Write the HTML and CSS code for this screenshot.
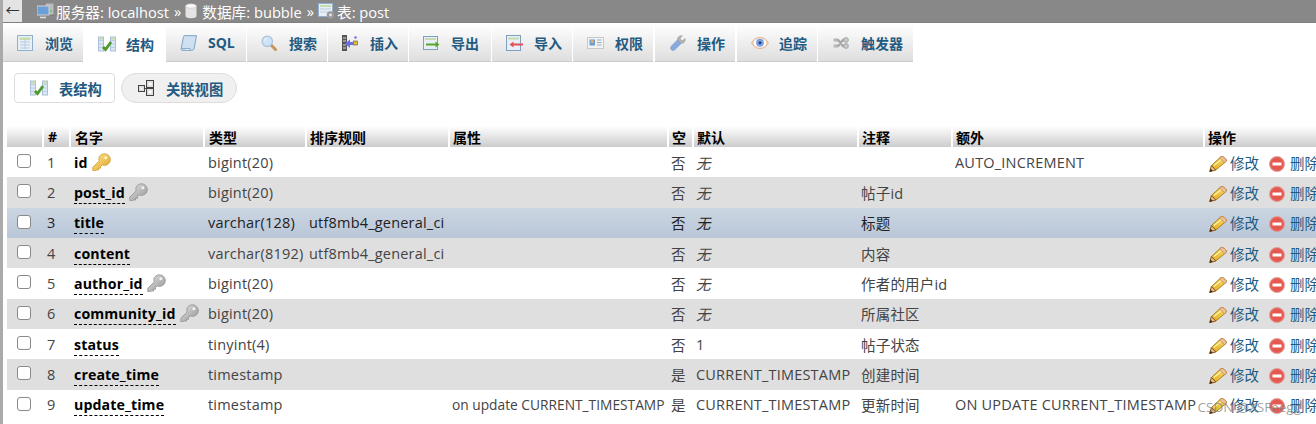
FILE: index.html
```html
<!DOCTYPE html>
<html lang="zh">
<head>
<meta charset="utf-8">
<title>post</title>
<link rel="stylesheet" href="styles.css">
</head>
<body>
<svg class="defs" width="0" height="0" aria-hidden="true">
  <defs>
    <linearGradient id="gk" x1="0" y1="0" x2="1" y2="1"><stop offset="0" stop-color="#fdeb9a"/><stop offset="1" stop-color="#e0a020"/></linearGradient>
    <linearGradient id="gg" x1="0" y1="0" x2="1" y2="1"><stop offset="0" stop-color="#e4e4e4"/><stop offset="1" stop-color="#929292"/></linearGradient>
    <linearGradient id="gp" x1="0" y1="1" x2="1" y2="0"><stop offset="0" stop-color="#e2ac1e"/><stop offset="1" stop-color="#f8de6a"/></linearGradient>
    <symbol id="i-key-gold" viewBox="0 0 19 18"><path d="M12.500.8a5.800 5.800 0 0 1 5.800 5.800c0 3.400-2.800 5.800-5.800 5.800-.9 0-1.600-.2-2.300-.5L8.500 13.500v1.700H6.500v1.800H4l-.6.6H.8v-3.300l6.400-6.400c-.2-.7-.4-1.300-.4-2.100C6.800 3.200 9.300.8 12.500.8z" fill="url(#gk)" stroke="#cf9a2c" stroke-width=".8"/><circle cx="13.800" cy="4.800" r="1.500" fill="#fff4c0"/></symbol>
    <symbol id="i-key-grey" viewBox="0 0 19 18"><path d="M12.500.8a5.800 5.800 0 0 1 5.800 5.800c0 3.400-2.800 5.800-5.800 5.800-.9 0-1.600-.2-2.300-.5L8.500 13.500v1.700H6.500v1.800H4l-.6.6H.8v-3.300l6.400-6.400c-.2-.7-.4-1.300-.4-2.100C6.800 3.200 9.300.8 12.500.8z" fill="url(#gg)" stroke="#8f8f8f" stroke-width=".8"/><circle cx="13.800" cy="4.800" r="1.500" fill="#f2f2f2"/></symbol>
    <symbol id="i-edit" viewBox="0 0 18 16"><path d="M12 .6c2-.5 5.600 2 5.400 4.500L6.800 14 2.400 9.600z" fill="url(#gp)" stroke="#a8741a" stroke-width=".9"/><path d="M12 .6c2-.5 5.600 2 5.400 4.500l-1.900 1.600-5-4.700z" fill="#efbf98" stroke="#b98850" stroke-width=".8"/><path d="M4.800 9.500l7.200-5.800" stroke="#fff3a8" stroke-width="1.300"/><path d="M2.400 9.600l4.400 4.400-6.200 1.700z" fill="#e6c08e" stroke="#7e4c12" stroke-width=".9"/><path d="M.6 15.700l.9-3.200 2.300 2.300z" fill="#4e2c06"/></symbol>
    <symbol id="i-del" viewBox="0 0 16 16"><circle cx="8" cy="8" r="7.600" fill="#e8655e" stroke="#d9a19c" stroke-width=".8"/><circle cx="8" cy="8" r="6" fill="#e55850"/><rect x="3.500" y="6.500" width="9" height="3" fill="#fff"/></symbol>
    <symbol id="i-struct" viewBox="0 0 18 16"><rect x=".5" y="1" width="5" height="14" fill="#dbe7f3" stroke="#a9c0d8"/><rect x="12.500" y="1" width="5" height="14" fill="#dbe7f3" stroke="#a9c0d8"/><path d="M1 4.500h4M1 8h4M1 11.500h4M13 4.500h4M13 8h4M13 11.500h4" stroke="#b8cfe6"/><rect x="1" y="1.500" width="4" height="2" fill="#c7dcae"/><rect x="13" y="1.500" width="4" height="2" fill="#c7dcae"/><path d="M5 11l2.500 2.500L13 6" fill="none" stroke="#4e9a2a" stroke-width="2.800"/></symbol>
    <symbol id="i-rel" viewBox="0 0 16 16"><rect x=".5" y="5.500" width="6" height="6" fill="#ddd" stroke="#444"/><rect x="8.500" y=".5" width="7" height="7" fill="#ddd" stroke="#444"/><rect x="8.500" y="8.500" width="7" height="7" fill="#ddd" stroke="#444"/><rect x="10.500" y="2.500" width="3" height="3" fill="#fff"/><rect x="10.500" y="10.500" width="3" height="3" fill="#fff"/><rect x="2.500" y="7.500" width="2" height="2" fill="#fff"/><path d="M6.500 8.500h2" stroke="#444"/></symbol>
    <symbol id="i-browse" viewBox="0 0 16 16"><rect x=".5" y=".5" width="15" height="15" fill="#e8eff7" stroke="#8fb0d0"/><path d="M3 7h10M3 10h10M3 13h10M8 5v9" stroke="#b8cce0"/><rect x="2.500" y="2.500" width="11" height="2.500" fill="#c7dcae"/></symbol>
    <symbol id="i-sql" viewBox="0 0 18 17"><path d="M4 .7h13l-2.500 13c-.3 1.700-1 2.600-2.500 2.600H2c-1 0-1.500-.8-1.300-2L3 2.500C3.200 1.300 3.400.7 4 .7z" fill="#cfe0f2" stroke="#6d94bd" stroke-width=".9"/><path d="M.8 14.300H10c-.3 1-.1 1.700.8 2" fill="#f0f6fc" stroke="#6d94bd" stroke-width=".8"/></symbol>
    <symbol id="i-search" viewBox="0 0 16 16"><path d="M10 10l4.500 4.500" stroke="#c9935a" stroke-width="3" stroke-linecap="round"/><circle cx="6.300" cy="6.300" r="5.200" fill="#cfe3f6" stroke="#a8c3db" stroke-width="1.300"/><path d="M3.500 5.500c.5-1.300 1.300-2 2.500-2.200" stroke="#fff" fill="none"/></symbol>
    <symbol id="i-insert" viewBox="0 0 16 16"><rect x="0" y="0" width="5" height="16" fill="#555"/><path d="M1 3h3M1 6h3M1 10h3M1 13h3" stroke="#ddd"/><path d="M3 8.500l5-4v2.500h3v3H8V13z" fill="#6a6ee0"/><rect x="11.500" y="6" width="4" height="4" fill="#e5b930" stroke="#555" stroke-width=".6"/><circle cx="13.500" cy="2.500" r="1.200" fill="#6a6ee0"/></symbol>
    <symbol id="i-export" viewBox="0 0 17 16"><rect x=".5" y="1.500" width="14" height="13" fill="#e8eff7" stroke="#7f9fbf"/><rect x="2" y="3" width="11" height="2" fill="#c7dcae"/><path d="M3 8.500h9.500V6.500l4 3-4 3v-2H3z" fill="#5aa52c"/></symbol>
    <symbol id="i-import" viewBox="0 0 17 16"><rect x=".5" y=".5" width="14" height="15" fill="#e8eff7" stroke="#7f9fbf"/><rect x="2" y="2.500" width="11" height="2" fill="#c7dcae"/><path d="M17 8.500H7.500V6.500l-4 3 4 3v-2H17z" fill="#e0505a"/></symbol>
    <symbol id="i-priv" viewBox="0 0 17 16"><rect x=".5" y="2.500" width="16" height="11" fill="#f3f3f3" stroke="#c8c8c8"/><rect x="2.500" y="4.500" width="5.500" height="6" fill="#6a9ed0"/><circle cx="5.200" cy="6.500" r="1.500" fill="#e9b070"/><path d="M10 5h4.500M10 7.500h4.500M10 10h4.500" stroke="#9ab"/></symbol>
    <symbol id="i-ops" viewBox="0 0 18 18"><path d="M1.500 16.500c-1.500-1.500-.8-3.200.5-4.500l6.500-6.500 4 4-6.500 6.500c-1.300 1.300-3 2-4.500.5z" fill="#86a9e0" stroke="#6a8cc0" stroke-width=".6"/><path d="M8.500 5.500C8 2.500 10.500.3 14 .8l-2.500 2.500.5 2.500 2.500.5 2.500-2.500c.5 3.500-1.500 6-4.500 5.500z" fill="#b4b4b4" stroke="#8f8f8f" stroke-width=".5"/></symbol>
    <symbol id="i-track" viewBox="0 0 18 12"><path d="M.5 6C3 1.500 6 .5 9 .5s6 1 8.500 5.500c-2.500 4.500-5.500 5.500-8.500 5.500S3 10.500.5 6z" fill="#f3cfb2" stroke="#d9a985" stroke-width=".7"/><ellipse cx="9" cy="6" rx="6.300" ry="4.500" fill="#fff"/><circle cx="9" cy="5.800" r="4" fill="#7da2e0"/><circle cx="9" cy="5.800" r="1.500" fill="#24408a"/></symbol>
    <symbol id="i-trig" viewBox="0 0 16 12"><path d="M1.500 3h3.500l5 6h3M1.500 9h3.500l5-6h3" fill="none" stroke="#a8a8a8" stroke-width="2.400"/><circle cx="13" cy="3" r="2.400" fill="#ccc" stroke="#8f8f8f" stroke-width=".7"/><circle cx="13" cy="9" r="2.400" fill="#ccc" stroke="#8f8f8f" stroke-width=".7"/><rect x=".5" y="1.500" width="3.500" height="3" fill="#bbb"/><rect x=".5" y="7.500" width="3.500" height="3" fill="#bbb"/></symbol>
    <symbol id="i-server" viewBox="0 0 17 16"><rect x="8" y="0" width="9" height="12" fill="#bbb" stroke="#666" stroke-width=".6"/><rect x="0" y="3" width="12" height="9" fill="#6a9fd8" stroke="#d0d0d0"/><path d="M3 14.500h6" stroke="#ddd" stroke-width="1.600"/><rect x="13" y="7" width="2" height="2" fill="#6c6"/></symbol>
    <symbol id="i-db" viewBox="0 0 12 16"><path d="M.5 3v10c0 3 11 3 11 0V3z" fill="#e4e4e4"/><ellipse cx="6" cy="3" rx="5.500" ry="2.200" fill="#f8f8f8" stroke="#bbb" stroke-width=".5"/></symbol>
    <symbol id="i-tbl" viewBox="0 0 17 16"><rect x=".5" y=".5" width="14" height="13" fill="#e8eff7" stroke="#8fb0d0"/><rect x="2" y="2" width="11" height="2" fill="#c7dcae"/><path d="M2 6h11M2 9h11" stroke="#b8cce0"/><circle cx="12.500" cy="12" r="3.800" fill="#9a9a9a"/><circle cx="12.500" cy="12" r="1.400" fill="#e6e6e6"/></symbol>
  </defs>
</svg>

<div class="page">
  <header class="topbar">
    <span class="back">←</span>
    <nav class="crumbs">
      <svg class="ic-crumb"><use href="#i-server"/></svg><span>服务器: localhost</span><span class="sep">»</span>
      <svg class="ic-crumb ic-db"><use href="#i-db"/></svg><span>数据库: bubble</span><span class="sep">»</span>
      <svg class="ic-crumb"><use href="#i-tbl"/></svg><span>表: post</span>
    </nav>
  </header>

  <nav class="tabs">
    <a class="tab"><svg class="ic"><use href="#i-browse"/></svg>浏览</a>
    <a class="tab active"><svg class="ic ic-wide"><use href="#i-struct"/></svg>结构</a>
    <a class="tab"><svg class="ic ic-wide"><use href="#i-sql"/></svg>SQL</a>
    <a class="tab"><svg class="ic"><use href="#i-search"/></svg>搜索</a>
    <a class="tab"><svg class="ic"><use href="#i-insert"/></svg>插入</a>
    <a class="tab wide"><svg class="ic ic-17"><use href="#i-export"/></svg>导出</a>
    <a class="tab"><svg class="ic ic-17"><use href="#i-import"/></svg>导入</a>
    <a class="tab gap"><svg class="ic ic-17"><use href="#i-priv"/></svg>权限</a>
    <a class="tab gap"><svg class="ic ic-wide"><use href="#i-ops"/></svg>操作</a>
    <a class="tab"><svg class="ic ic-wide"><use href="#i-track"/></svg>追踪</a>
    <a class="tab last"><svg class="ic"><use href="#i-trig"/></svg>触发器</a>
  </nav>

  <div class="subnav">
    <a class="sub first"><svg class="ic ic-wide"><use href="#i-struct"/></svg>表结构</a>
    <a class="sub second"><svg class="ic"><use href="#i-rel"/></svg>关联视图</a>
  </div>

  <div class="table-wrap">
    <table class="fields">
      <colgroup>
        <col class="c-check"><col class="c-num"><col class="c-name"><col class="c-type"><col class="c-coll"><col class="c-attr"><col class="c-null"><col class="c-def"><col class="c-com"><col class="c-extra"><col class="c-act">
      </colgroup>
      <thead>
        <tr><th></th><th class="num">#</th><th class="pad4">名字</th><th class="pad4">类型</th><th>排序规则</th><th>属性</th><th>空</th><th>默认</th><th>注释</th><th>额外</th><th>操作</th></tr>
      </thead>
      <tbody>
        <tr>
          <td class="cb"><span class="check"></span></td><td class="num">1</td>
          <td class="pad4"><b>id</b><svg class="key"><use href="#i-key-gold"/></svg></td>
          <td class="pad4">bigint(20)</td><td></td><td></td><td>否</td><td><i>无</i></td><td></td><td>AUTO_INCREMENT</td>
          <td class="act"><svg class="pen"><use href="#i-edit"/></svg><a>修改</a><svg class="del"><use href="#i-del"/></svg><a>删除</a></td>
        </tr>
        <tr class="even">
          <td class="cb"><span class="check"></span></td><td class="num">2</td>
          <td class="pad4"><b class="fn">post_id</b><svg class="key"><use href="#i-key-grey"/></svg></td>
          <td class="pad4">bigint(20)</td><td></td><td></td><td>否</td><td><i>无</i></td><td>帖子id</td><td></td>
          <td class="act"><svg class="pen"><use href="#i-edit"/></svg><a>修改</a><svg class="del"><use href="#i-del"/></svg><a>删除</a></td>
        </tr>
        <tr class="hover">
          <td class="cb"><span class="check"></span></td><td class="num">3</td>
          <td class="pad4"><b class="fn">title</b></td>
          <td class="pad4">varchar(128)</td><td>utf8mb4_general_ci</td><td></td><td>否</td><td><i>无</i></td><td>标题</td><td></td>
          <td class="act"><svg class="pen"><use href="#i-edit"/></svg><a>修改</a><svg class="del"><use href="#i-del"/></svg><a>删除</a></td>
        </tr>
        <tr class="even">
          <td class="cb"><span class="check"></span></td><td class="num">4</td>
          <td class="pad4"><b class="fn">content</b></td>
          <td class="pad4">varchar(8192)</td><td>utf8mb4_general_ci</td><td></td><td>否</td><td><i>无</i></td><td>内容</td><td></td>
          <td class="act"><svg class="pen"><use href="#i-edit"/></svg><a>修改</a><svg class="del"><use href="#i-del"/></svg><a>删除</a></td>
        </tr>
        <tr>
          <td class="cb"><span class="check"></span></td><td class="num">5</td>
          <td class="pad4"><b class="fn">author_id</b><svg class="key"><use href="#i-key-grey"/></svg></td>
          <td class="pad4">bigint(20)</td><td></td><td></td><td>否</td><td><i>无</i></td><td>作者的用户id</td><td></td>
          <td class="act"><svg class="pen"><use href="#i-edit"/></svg><a>修改</a><svg class="del"><use href="#i-del"/></svg><a>删除</a></td>
        </tr>
        <tr class="even">
          <td class="cb"><span class="check"></span></td><td class="num">6</td>
          <td class="pad4"><b class="fn">community_id</b><svg class="key"><use href="#i-key-grey"/></svg></td>
          <td class="pad4">bigint(20)</td><td></td><td></td><td>否</td><td><i>无</i></td><td>所属社区</td><td></td>
          <td class="act"><svg class="pen"><use href="#i-edit"/></svg><a>修改</a><svg class="del"><use href="#i-del"/></svg><a>删除</a></td>
        </tr>
        <tr>
          <td class="cb"><span class="check"></span></td><td class="num">7</td>
          <td class="pad4"><b class="fn">status</b></td>
          <td class="pad4">tinyint(4)</td><td></td><td></td><td>否</td><td>1</td><td>帖子状态</td><td></td>
          <td class="act"><svg class="pen"><use href="#i-edit"/></svg><a>修改</a><svg class="del"><use href="#i-del"/></svg><a>删除</a></td>
        </tr>
        <tr class="even">
          <td class="cb"><span class="check"></span></td><td class="num">8</td>
          <td class="pad4"><b class="fn">create_time</b></td>
          <td class="pad4">timestamp</td><td></td><td></td><td>是</td><td>CURRENT_TIMESTAMP</td><td>创建时间</td><td></td>
          <td class="act"><svg class="pen"><use href="#i-edit"/></svg><a>修改</a><svg class="del"><use href="#i-del"/></svg><a>删除</a></td>
        </tr>
        <tr>
          <td class="cb"><span class="check"></span></td><td class="num">9</td>
          <td class="pad4"><b class="fn">update_time</b></td>
          <td class="pad4">timestamp</td><td></td><td class="attr">on update CURRENT_TIMESTAMP</td><td>是</td><td>CURRENT_TIMESTAMP</td><td>更新时间</td><td>ON UPDATE CURRENT_TIMESTAMP</td>
          <td class="act"><svg class="pen"><use href="#i-edit"/></svg><a>修改</a><svg class="del"><use href="#i-del"/></svg><a>删除</a></td>
        </tr>
      </tbody>
    </table>
    <span class="watermark">CSDN @XSFeegg</span>
  </div>
</div>
</body>
</html>
```
FILE: styles.css
```css
* { box-sizing: border-box; }
html, body { margin: 0; height: 100%; }
body {
  width: 1316px;
  height: 424px;
  overflow: hidden;
  background: #fff;
  font-family: "Open Sans", "Noto Sans CJK SC", sans-serif;
  font-size: 14px;
  color: #444;
}
.defs { position: absolute; }
.page { height: 424px; border-left: 3px solid #aaa; position: relative; overflow: hidden; }

.topbar {
  height: 23px;
  margin-left: -3px;
  padding-left: 3px;
  background: #888;
  display: flex;
  align-items: center;
  color: #fff;
  border-bottom: 1px solid #808080;
}
.back {
  width: 19px; height: 22px;
  background: #e4e4e4;
  color: #333;
  font-size: 14px;
  line-height: 20px;
  text-align: center;
  flex: none;
}
.crumbs { display: flex; align-items: center; margin-left: 15px; font-size: 14.670px; white-space: nowrap; }
.ic-crumb { width: 17px; height: 16px; margin-right: 2px; }
.ic-db { width: 12px; margin-right: 5px; }
.sep { margin: 0 4px 0 5px; }

.tabs {
  display: flex;
  height: 39px;
  padding-top: 1px;
  background: #fff;
}
.tab {
  width: 80px;
  height: 38px;
  margin-right: 1px;
  padding-left: 14px;
  display: flex;
  align-items: center;
  font-weight: 700;
  font-size: 14px;
  color: #235a81;
  background: linear-gradient(#fff, #dedede);
  border-bottom: 1px solid #ccc;
  white-space: nowrap;
}
.tab.wide { width: 82px; }
.tab.gap { margin-right: 2px; }
.tab.last { width: 95px; padding-left: 15px; }
.tab.active { background: #fff; border-bottom: 0; height: 39px; width: 81px; }
.ic { width: 16px; height: 16px; margin-right: 12px; flex: none; }
.ic-wide { width: 18px; margin-right: 10px; }
.ic-17 { width: 17px; margin-right: 11px; }

.subnav { display: flex; gap: 6px; padding: 11px 0 0 11px; height: 64px; }
.sub {
  height: 30px;
  display: flex;
  align-items: center;
  font-weight: 700;
  font-size: 14.300px;
  color: #235a81;
  border: 1px solid #ddd;
  white-space: nowrap;
}
.sub.first { width: 101px; padding-left: 15px; border-radius: 4px; background: #fff; }
.sub.second { width: 116px; padding-left: 16px; border-radius: 15px; background: #f0f0f0; }
.sub .ic { margin-right: 12px; }
.sub .ic-wide { margin-right: 11px; }

.table-wrap { margin-left: 4px; position: relative; }
.fields { border-collapse: collapse; table-layout: fixed; width: 1345px; }
.c-check { width: 36px; } .c-num { width: 27px; } .c-name { width: 134px; } .c-type { width: 102px; }
.c-coll { width: 143px; } .c-attr { width: 219px; } .c-null { width: 25px; } .c-def { width: 165px; }
.c-com { width: 94px; } .c-extra { width: 252px; } .c-act { width: 148px; }

.fields th {
  height: 21px;
  padding: 0 3px;
  text-align: left;
  font-size: 14px;
  font-weight: 700;
  color: #000;
  background: linear-gradient(#fff, #ccc);
  border-left: 2px solid #fff;
  white-space: nowrap;
}
.fields th:first-child { border-left: 0; }
.fields td {
  height: 30.330px;
  padding: 0 3px;
  font-size: 14.500px;
  letter-spacing: .2px;
  color: #444;
  white-space: nowrap;
  overflow: visible;
  vertical-align: middle;
}
.fields .num { padding-left: 4px; }
.fields .pad4 { padding-left: 4px; }
.fields td.attr { font-size: 13.750px; letter-spacing: 0; }
.fields td i { font-style: italic; }
.fields b { font-weight: 700; color: #000; font-size: 14.200px; letter-spacing: .1px; }
.fields b.fn { border-bottom: 1px dashed #000; padding-bottom: 1px; }
.even td { background: #dfdfdf; }
.hover td { background: linear-gradient(#ccd6e2, #b9c7d8); color: #222; }
.fields .cb { padding-left: 10px; }
.check {
  display: block;
  width: 14px; height: 14px;
  margin-top: -2px;
  border: 1.500px solid #8a8a8a;
  border-radius: 3px;
  background: #fff;
}
.key { width: 19px; height: 18px; margin-left: 4px; vertical-align: -3px; }
.fields .act { padding-left: 5px; letter-spacing: 0; }
.act a { color: #235a81; }
.pen { width: 18px; height: 16px; margin-right: 3px; vertical-align: -3px; }
.del { width: 16px; height: 16px; margin: 0 5px 0 10px; vertical-align: -3px; }
.watermark {
  position: absolute;
  right: 15px; bottom: 4px;
  font-size: 13.500px;
  color: rgba(130,130,130,.75);
  white-space: nowrap;
}
```
